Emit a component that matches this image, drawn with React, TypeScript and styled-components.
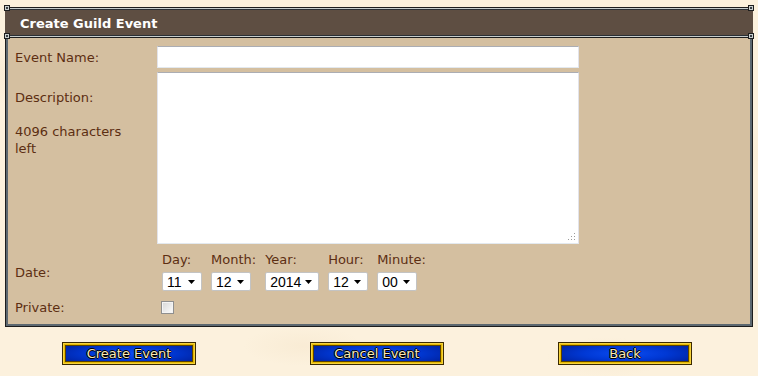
import React from 'react'
import styled, { createGlobalStyle } from 'styled-components'

const GlobalStyle = createGlobalStyle`
  body {
    margin: 0;
    background-color: #fcf1dd;
    background-image:
      radial-gradient(ellipse 50px 20px at 12% 70%, rgba(236, 214, 180, 0.25), transparent),
      radial-gradient(ellipse 60px 20px at 40% 92%, rgba(236, 214, 180, 0.2), transparent),
      radial-gradient(ellipse 60px 20px at 80% 95%, rgba(236, 214, 180, 0.2), transparent),
      radial-gradient(ellipse 70px 30px at 95% 40%, rgba(236, 214, 180, 0.2), transparent),
      radial-gradient(ellipse 70px 30px at 2% 20%, rgba(236, 214, 180, 0.2), transparent);
    font-family: 'DejaVu Sans', Verdana, sans-serif;
    font-size: 13px;
  }
`

const Page = styled.div`
  padding: 7px 5px 0 5px;
  height: 376px;
  box-sizing: border-box;
`

const Panel = styled.div`
  position: relative;
`

const Header = styled.div`
  position: relative;
  height: 31px;
  box-sizing: border-box;
  display: flex;
  align-items: center;
  padding: 1px 0 0 15px;
  background: #5e4e42;
  box-shadow:
    inset 0 1px #1e1e1e,
    inset 0 2px #c6cccb,
    inset 0 3px #2b3035,
    inset 0 -1px #1e1e1e,
    inset 0 -2px #c6cccb,
    inset 0 -3px #2b3035;
`

const Title = styled.span`
  color: #ffffff;
  font-weight: bold;
  font-size: 13px;
`

const Rivet = styled.span<{ $top?: boolean; $right?: boolean }>`
  position: absolute;
  width: 6px;
  height: 6px;
  box-sizing: border-box;
  background: #c8cecd;
  border: 1px solid #1e1e1e;
  ${(p) => (p.$top ? 'top: -2px;' : 'bottom: -1px;')}
  ${(p) => (p.$right ? 'right: -1px;' : 'left: -1px;')}
  &::after {
    content: '';
    position: absolute;
    left: 1px;
    top: 1px;
    width: 2px;
    height: 2px;
    background: #3a3f44;
  }
`

const Body = styled.div`
  background: #d4bfa0;
  border: 1px solid #1d1d1d;
  border-top: none;
  box-shadow:
    inset 2px 0 #5d6870,
    inset -2px 0 #5d6870,
    inset 0 -2px #5d6870;
  padding: 8px 10px 10px 9px;
  display: grid;
  grid-template-columns: 125px 1fr;
  column-gap: 17px;
`

const Label = styled.div<{ $padTop?: number }>`
  color: #5c2e12;
  font-size: 13px;
  line-height: 17px;
  padding-top: ${(p) => p.$padTop ?? 0}px;
`

const Cell = styled.div<{ $gap?: number; $align?: string }>`
  margin-top: ${(p) => p.$gap ?? 0}px;
  display: flex;
  align-items: ${(p) => p.$align ?? 'center'};
`

const LabelCell = styled(Cell)`
  color: #5c2e12;
  padding-top: 1px;
`

const TextInput = styled.div`
  width: 422px;
  height: 22px;
  box-sizing: border-box;
  background: #ffffff;
  border: 1px solid #e2e3ea;
  border-top-color: #abadb3;
  border-bottom-color: #e3e9ef;
`

const TextArea = styled(TextInput)`
  position: relative;
  height: 172px;
`

const Grip = styled.svg`
  position: absolute;
  right: 2px;
  bottom: 2px;
`

const DateFields = styled.div`
  display: flex;
  gap: 9px;
  margin-left: 5px;
`

const DateField = styled.div`
  display: flex;
  flex-direction: column;
  gap: 4px;
  color: #5c2e12;
  line-height: 16px;
`

const Select = styled.div<{ $width: number }>`
  width: ${(p) => p.$width}px;
  height: 19px;
  box-sizing: border-box;
  background: #ffffff;
  border: 1px solid #c3c3c3;
  border-radius: 2px;
  display: flex;
  align-items: center;
  justify-content: space-between;
  padding: 0 6px 0 4px;
  font-family: 'Liberation Sans', Arial, sans-serif;
  font-size: 14px;
  color: #000000;
`

const Checkbox = styled.span`
  display: inline-block;
  width: 13px;
  height: 13px;
  box-sizing: border-box;
  margin-left: 4px;
  border: 1px solid #8f8f8f;
  background: linear-gradient(135deg, #d6d6d6, #fdfdfd);
  box-shadow: inset 0 0 0 1px #f4f4f4;
`

const ButtonBar = styled.div`
  display: grid;
  grid-template-columns: repeat(3, 1fr);
  margin-top: 15px;
  padding-right: 4px;
`

const GoldButton = styled.button`
  justify-self: center;
  width: 134px;
  height: 23px;
  box-sizing: border-box;
  padding: 0;
  border: 1px solid #3b2a00;
  background: radial-gradient(ellipse at center, #0a4cf2 0%, #0038d4 45%, #001a8e 100%);
  box-shadow:
    inset 0 0 0 1px #f6d23a,
    inset 0 0 0 2px #e6b800,
    inset 0 0 0 3px #5a4200;
  color: #f7e8b8;
  font-family: 'DejaVu Sans', Verdana, sans-serif;
  font-size: 13px;
  text-shadow:
    1px 0 #000,
    -1px 0 #000,
    0 1px #000,
    0 -1px #000;
  cursor: pointer;
`

const Arrow = () => (
  <svg width='7' height='4' viewBox='0 0 7 4'>
    <path d='M0 0 H7 L3.5 4 Z' fill='#000' />
  </svg>
)

const dateFields = [
  { label: 'Day:', value: '11', width: 40 },
  { label: 'Month:', value: '12', width: 40 },
  { label: 'Year:', value: '2014', width: 54 },
  { label: 'Hour:', value: '12', width: 40 },
  { label: 'Minute:', value: '00', width: 40 },
]

const gripDots = [
  [7, 1],
  [4, 4],
  [7, 4],
  [1, 7],
  [4, 7],
  [7, 7],
]

export default function App() {
  return (
    <>
      <GlobalStyle />
      <Page>
        <Panel>
          <Header>
            <Title>Create Guild Event</Title>
            <Rivet $top />
            <Rivet $top $right />
            <Rivet />
            <Rivet $right />
          </Header>
          <Body>
            <LabelCell>Event Name:</LabelCell>
            <Cell>
              <TextInput />
            </Cell>

            <Cell $gap={4} $align='flex-start'>
              <Label $padTop={17}>
                Description:
                <br />
                <br />
                4096 characters left
              </Label>
            </Cell>
            <Cell $gap={4}>
              <TextArea>
                <Grip width='9' height='9' viewBox='0 0 9 9'>
                  {gripDots.map(([x, y]) => (
                    <rect key={`${x}-${y}`} x={x} y={y} width='1' height='1' fill='#9a9a9a' />
                  ))}
                </Grip>
              </TextArea>
            </Cell>

            <LabelCell $gap={8}>Date:</LabelCell>
            <Cell $gap={8}>
              <DateFields>
                {dateFields.map((field) => (
                  <DateField key={field.label}>
                    <span>{field.label}</span>
                    <Select $width={field.width}>
                      <span>{field.value}</span>
                      <Arrow />
                    </Select>
                  </DateField>
                ))}
              </DateFields>
            </Cell>

            <LabelCell $gap={7}>
              <Label>Private:</Label>
            </LabelCell>
            <Cell $gap={7}>
              <Checkbox />
            </Cell>
          </Body>
        </Panel>

        <ButtonBar>
          <GoldButton>Create Event</GoldButton>
          <GoldButton>Cancel Event</GoldButton>
          <GoldButton>Back</GoldButton>
        </ButtonBar>
      </Page>
    </>
  )
}
